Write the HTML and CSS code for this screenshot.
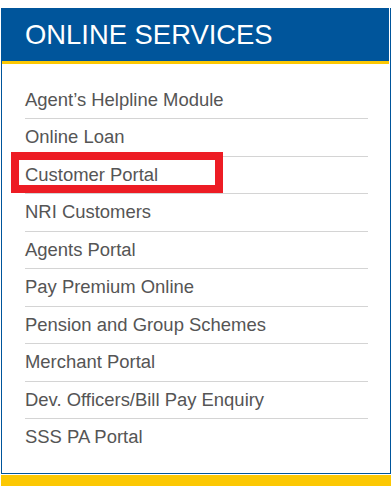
FILE: index.html
```html
<!DOCTYPE html>
<html lang="en">
<head>
    <meta charset="UTF-8">
    <meta name="viewport" content="width=device-width, initial-scale=1.0">
    <title>Online Services</title>
    <link rel="stylesheet" href="styles.css">
</head>
<body>
    <div class="services-box">
        <h2 class="services-title">ONLINE SERVICES</h2>
        <ul class="services-list">
            <li><a href="#">Agent’s Helpline Module</a></li>
            <li><a href="#">Online Loan</a></li>
            <li class="highlighted"><a href="#">Customer Portal</a><span class="mark"></span></li>
            <li><a href="#">NRI Customers</a></li>
            <li><a href="#">Agents Portal</a></li>
            <li><a href="#">Pay Premium Online</a></li>
            <li><a href="#">Pension and Group Schemes</a></li>
            <li><a href="#">Merchant Portal</a></li>
            <li><a href="#">Dev. Officers/Bill Pay Enquiry</a></li>
            <li><a href="#">SSS PA Portal</a></li>
        </ul>
    </div>
    <div class="footer-strip"></div>
</body>
</html>
```

FILE: styles.css
```css
body {
    font-family: Arial, "Liberation Sans", sans-serif;
    background-color: #fff;
    margin: 8px 0 0 1px;
    padding: 0;
}
.services-box {
    width: 390px;
    box-sizing: border-box;
    border: 1px solid #00559b;
    border-top: none;
}
.services-title {
    margin: 0 1px 0 0;
    height: 53px;
    line-height: 53px;
    padding-left: 23px;
    background-color: #00559b;
    border-bottom: 3px solid #fcc803;
    color: #fff;
    font-size: 27.4px;
    font-weight: normal;
}
.services-list {
    list-style: none;
    margin: 0;
    padding: 17.5px 22px 17.5px 23px;
}
.services-list li {
    padding: 8px 0;
    line-height: 20.5px;
    font-size: 18.45px;
    border-bottom: 1px solid #d4d4d4;
}
.services-list li:last-child {
    border-bottom: none;
}
.services-list a {
    color: #555;
    text-decoration: none;
}
.highlighted {
    position: relative;
}
.mark {
    position: absolute;
    left: -14px;
    top: -4.5px;
    width: 212px;
    height: 41px;
    box-sizing: border-box;
    border: 8px solid #ed1c24;
}
.footer-strip {
    height: 20px;
    background-color: #fcc803;
    margin-top: 1px;
}
```
